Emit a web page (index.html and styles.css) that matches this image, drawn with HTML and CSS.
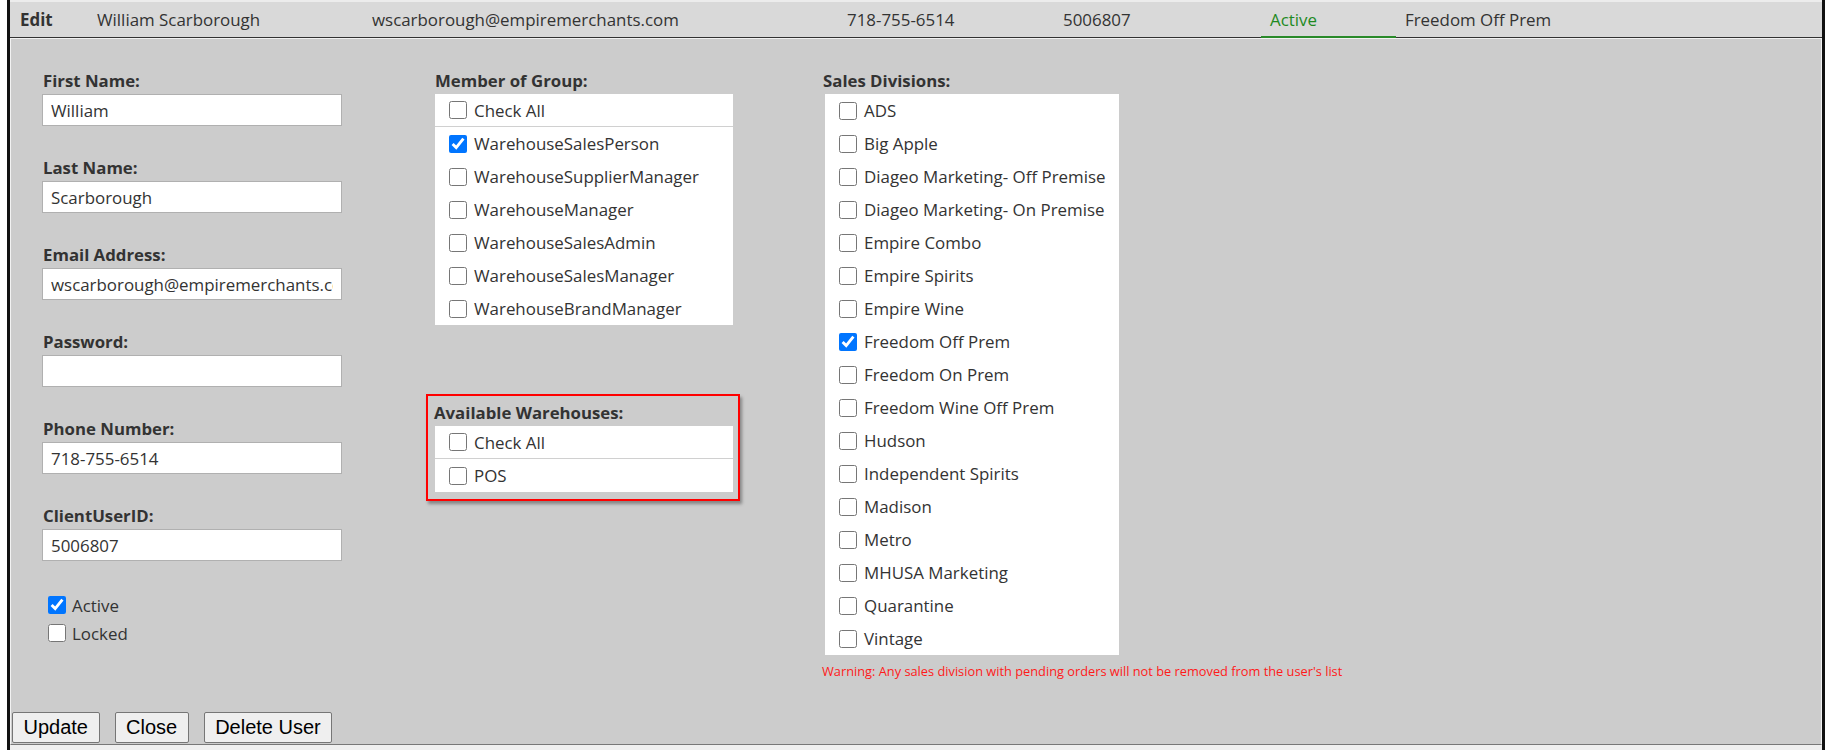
FILE: index.html
```html
<!DOCTYPE html>
<html lang="en">
<head>
<meta charset="utf-8">
<title>Edit User</title>
<link rel="stylesheet" href="styles.css">
</head>
<body>
<div class="frame">
  <div class="topstrip"></div>
  <div class="header">
    <div class="hc c-edit"><b>Edit</b></div>
    <div class="hc c-name">William Scarborough</div>
    <div class="hc c-email">wscarborough@empiremerchants.com</div>
    <div class="hc c-phone">718-755-6514</div>
    <div class="hc c-id">5006807</div>
    <div class="hc c-status">Active</div>
    <div class="hc c-div">Freedom Off Prem</div>
  </div>
  <div class="panel">
    <div class="form">
      <div class="col col1">
        <div class="field"><label class="lbl">First Name:</label><input class="txt" type="text" value="William"></div>
        <div class="field"><label class="lbl">Last Name:</label><input class="txt" type="text" value="Scarborough"></div>
        <div class="field"><label class="lbl">Email Address:</label><input class="txt" type="text" value="wscarborough@empiremerchants.com"></div>
        <div class="field"><label class="lbl">Password:</label><input class="txt" type="password" value=""></div>
        <div class="field"><label class="lbl">Phone Number:</label><input class="txt" type="text" value="718-755-6514"></div>
        <div class="field"><label class="lbl">ClientUserID:</label><input class="txt" type="text" value="5006807"></div>
        <div class="flags">
          <label class="flag"><input type="checkbox" checked><span>Active</span></label>
          <label class="flag"><input type="checkbox"><span>Locked</span></label>
        </div>
      </div>
      <div class="col col2">
        <div class="lbl">Member of Group:</div>
        <div class="list">
          <label class="row all"><input type="checkbox"><span>Check All</span></label>
          <label class="row"><input type="checkbox" checked><span>WarehouseSalesPerson</span></label>
          <label class="row"><input type="checkbox"><span>WarehouseSupplierManager</span></label>
          <label class="row"><input type="checkbox"><span>WarehouseManager</span></label>
          <label class="row"><input type="checkbox"><span>WarehouseSalesAdmin</span></label>
          <label class="row"><input type="checkbox"><span>WarehouseSalesManager</span></label>
          <label class="row"><input type="checkbox"><span>WarehouseBrandManager</span></label>
        </div>
        <div class="highlight">
          <div class="lbl">Available Warehouses:</div>
          <div class="list">
            <label class="row all"><input type="checkbox"><span>Check All</span></label>
            <label class="row"><input type="checkbox"><span>POS</span></label>
          </div>
        </div>
      </div>
      <div class="col col3">
        <div class="lbl">Sales Divisions:</div>
        <div class="list divisions">
          <label class="row"><input type="checkbox"><span>ADS</span></label>
          <label class="row"><input type="checkbox"><span>Big Apple</span></label>
          <label class="row"><input type="checkbox"><span>Diageo Marketing- Off Premise</span></label>
          <label class="row"><input type="checkbox"><span>Diageo Marketing- On Premise</span></label>
          <label class="row"><input type="checkbox"><span>Empire Combo</span></label>
          <label class="row"><input type="checkbox"><span>Empire Spirits</span></label>
          <label class="row"><input type="checkbox"><span>Empire Wine</span></label>
          <label class="row"><input type="checkbox" checked><span>Freedom Off Prem</span></label>
          <label class="row"><input type="checkbox"><span>Freedom On Prem</span></label>
          <label class="row"><input type="checkbox"><span>Freedom Wine Off Prem</span></label>
          <label class="row"><input type="checkbox"><span>Hudson</span></label>
          <label class="row"><input type="checkbox"><span>Independent Spirits</span></label>
          <label class="row"><input type="checkbox"><span>Madison</span></label>
          <label class="row"><input type="checkbox"><span>Metro</span></label>
          <label class="row"><input type="checkbox"><span>MHUSA Marketing</span></label>
          <label class="row"><input type="checkbox"><span>Quarantine</span></label>
          <label class="row"><input type="checkbox"><span>Vintage</span></label>
        </div>
        <div class="warn">Warning: Any sales division with pending orders will not be removed from the user's list</div>
      </div>
    </div>
    <div class="buttons">
      <button class="btn" type="button">Update</button>
      <button class="btn" type="button">Close</button>
      <button class="btn" type="button">Delete User</button>
    </div>
  </div>
  <div class="bottomstrip"></div>
</div>
</body>
</html>
```

FILE: styles.css
```css
* { box-sizing: border-box; }
html, body { margin: 0; padding: 0; background: #ffffff; }
body { font-family: "Open Sans", "Noto Sans", sans-serif; color: #333333; font-size: 16.9px; }

.frame {
  margin-left: 7px;
  width: 1818px;
  border-left: 3px solid #111111;
  border-right: 3px solid #111111;
  height: 750px;
}
.topstrip { height: 2px; background: #ececec; }

.header {
  display: flex;
  height: 36px;
  background: #d9d9d9;
  border-bottom: 1px solid #333333;
  font-size: 16.9px;
}
.hc { display: flex; align-items: center; padding-left: 9px; white-space: nowrap; }
.c-edit { width: 78px; padding-left: 10px; }
.c-name { width: 275px; }
.c-email { width: 475px; }
.c-phone { width: 216px; }
.c-id { width: 207px; }
.c-status { width: 135px; color: #1f8a1f; position: relative; }
.c-status::after { content: ""; position: absolute; left: 0; right: 0; bottom: -1px; height: 2px; background: #2a8a2a; }
.c-div { flex: 1; }

.panel {
  display: flex;
  flex-direction: column;
  height: 707px;
  background: #cccccc;
  border: 1px solid #f2f2f2;
  border-bottom-color: #777777;
}
.form { flex: 1; display: flex; padding: 30px 0 0 32px; }
.col1 { width: 392px; }
.col2 { width: 390px; }
.col3 { width: 560px; margin-left: -2px; }

.lbl { display: block; font-weight: bold; font-size: 16.8px; line-height: 24px; height: 25px; white-space: nowrap; }
.field { margin-bottom: 30px; }
.txt {
  display: block;
  width: 300px;
  height: 32px;
  margin-left: -1px;
  border: 1px solid #b0b0b0;
  background: #fff;
  padding: 0 8px;
  font-family: inherit;
  font-size: 16.9px;
  color: #333333;
  outline: none;
}
.flags { margin-left: 5px; }
.flag { display: flex; align-items: center; height: 28px; gap: 6px; }

input[type="checkbox"] { width: 18px; height: 18px; margin: 0; flex: none; }

.list { background: #ffffff; width: 298px; }
.divisions { width: 294px; margin-left: 2px; }
.row { display: flex; align-items: center; height: 33px; padding-left: 14px; gap: 7px; white-space: nowrap; }
.row.all { border-bottom: 1px solid #d0d0d0; }

.highlight {
  margin-top: 69px;
  margin-left: -9px;
  width: 314px;
  border: 2px solid #ff0000;
  padding: 5px 5px 7px 7px;
  box-shadow: 2px 3px 3px rgba(0,0,0,0.35);
}
.highlight .lbl { margin-left: -1px; }

.warn { color: #ff1a1a; font-size: 12.8px; margin-top: 7px; margin-left: -1px; white-space: nowrap; }

.buttons { display: flex; gap: 15px; margin: 0 0 1px 1px; }
.btn {
  height: 31px;
  padding: 0 10.5px;
  font-family: "Liberation Sans", Arial, sans-serif;
  font-size: 20px;
  color: #000;
  background: #efefef;
  border: 1px solid #767676;
  border-radius: 2px;
}
.bottomstrip { height: 5px; background: #efefef; }
```
